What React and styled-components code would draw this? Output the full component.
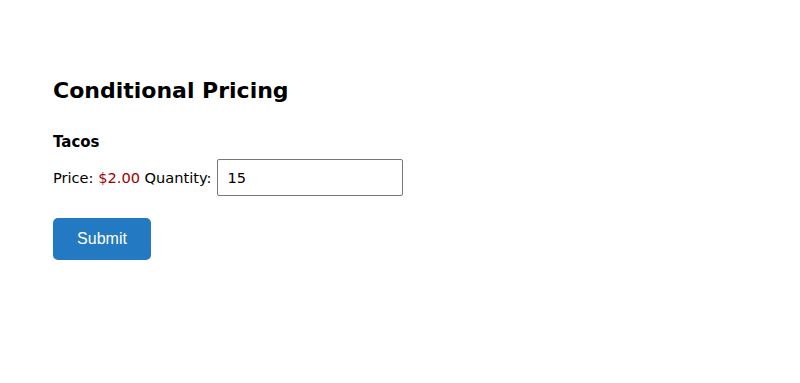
import React, { useState } from 'react'
import styled, { createGlobalStyle } from 'styled-components'

const GlobalStyle = createGlobalStyle`
    body {
        margin: 0;
        background: #fff;
        font-family: "DejaVu Sans", Verdana, sans-serif;
        color: #000;
    }
`

const Page = styled.div`
    padding: 78px 53px;
`

const Title = styled.h1`
    font-size: 22px;
    font-weight: bold;
    margin: 0 0 30px;
`

const ItemName = styled.h3`
    font-size: 15px;
    font-weight: bold;
    margin: 0 0 8px;
`

const Row = styled.div`
    display: flex;
    align-items: center;
    gap: 5px;
    font-size: 14.6px;
`

const Price = styled.span`
    color: #a00000;
`

const QtyInput = styled.input`
    width: 186px;
    height: 37px;
    box-sizing: border-box;
    border: 1px solid #777;
    border-radius: 2px;
    padding: 0 10px;
    font-family: "DejaVu Sans", Verdana, sans-serif;
    font-size: 14.6px;
`

const SubmitButton = styled.button`
    margin-top: 22px;
    width: 98px;
    height: 42px;
    background: #2479c3;
    color: #fff;
    border: none;
    border-radius: 5px;
    font-family: "Liberation Sans", Arial, sans-serif;
    font-size: 16px;
    cursor: pointer;
`

const App = () => {
    const [quantity, setQuantity] = useState('15')

    return (
        <>
            <GlobalStyle />
            <Page>
                <Title>Conditional Pricing</Title>
                <ItemName>Tacos</ItemName>
                <Row>
                    <span>Price: <Price>$2.00</Price> Quantity:</span>
                    <QtyInput value={quantity} onChange={(e) => setQuantity(e.target.value)} />
                </Row>
                <SubmitButton>Submit</SubmitButton>
            </Page>
        </>
    )
}

export default App
